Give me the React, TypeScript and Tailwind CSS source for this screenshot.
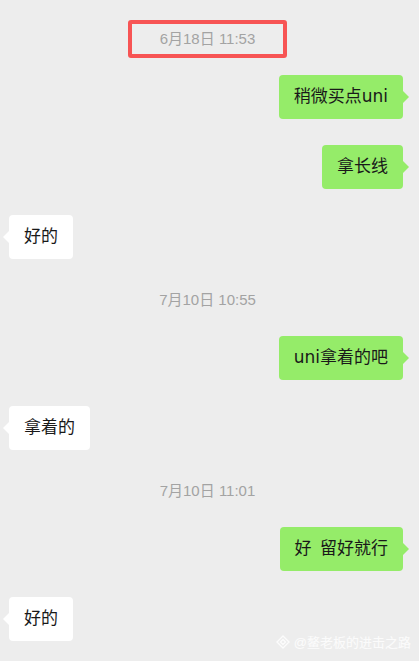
const font = {
  fontFamily: '"Liberation Sans", "Noto Sans CJK SC", sans-serif',
}

const bubbleFont = {
  fontFamily: '"DejaVu Sans", "Noto Sans CJK SC", sans-serif',
}

type Item =
  | { kind: 'time'; text: string; marked?: boolean }
  | { kind: 'msg'; side: 'left' | 'right'; text: string }

const items: Item[] = [
  { kind: 'time', text: '6月18日 11:53', marked: true },
  { kind: 'msg', side: 'right', text: '稍微买点uni' },
  { kind: 'msg', side: 'right', text: '拿长线' },
  { kind: 'msg', side: 'left', text: '好的' },
  { kind: 'time', text: '7月10日 10:55' },
  { kind: 'msg', side: 'right', text: 'uni拿着的吧' },
  { kind: 'msg', side: 'left', text: '拿着的' },
  { kind: 'time', text: '7月10日 11:01' },
  { kind: 'msg', side: 'right', text: '好 留好就行' },
  { kind: 'msg', side: 'left', text: '好的' },
]

function TimeRow({ text, marked, first }: { text: string; marked?: boolean; first: boolean }) {
  return (
    <div className={`flex h-5 items-center justify-center pr-1 ${first ? '' : 'mt-[5px]'}`}>
      <span className="relative text-[15px] leading-5 text-[#a3a3a3]">
        {text}
        {marked && (
          <span className="absolute -top-[9px] -bottom-[9px] -left-[32px] -right-[32px] rounded-[3px] border-4 border-[#f75454]" />
        )}
      </span>
    </div>
  )
}

function Bubble({ side, text }: { side: 'left' | 'right'; text: string }) {
  const isRight = side === 'right'
  return (
    <div className={`flex ${isRight ? 'justify-end pr-4' : 'justify-start pl-[9px]'}`}>
      <div
        className={`relative flex h-11 items-center rounded-[4px] px-[15px] text-[17px] text-[#191919] [word-spacing:3px] ${
          isRight ? 'bg-[#95ec69]' : 'bg-white'
        }`}
        style={bubbleFont}
      >
        {text}
        {isRight ? (
          <span className="absolute top-1/2 -right-[6px] -mt-[6px] h-0 w-0 border-y-[6px] border-l-[6px] border-y-transparent border-l-[#95ec69]" />
        ) : (
          <span className="absolute top-1/2 -left-[6px] -mt-[6px] h-0 w-0 border-y-[6px] border-r-[6px] border-y-transparent border-r-white" />
        )}
      </div>
    </div>
  )
}

export default function App() {
  return (
    <div className="relative h-[661px] w-[419px] overflow-hidden bg-[#ededed]" style={font}>
      <div className="flex flex-col gap-[26px] pt-[29px]">
        {items.map((item, i) =>
          item.kind === 'time' ? (
            <TimeRow key={i} text={item.text} marked={item.marked} first={i === 0} />
          ) : (
            <Bubble key={i} side={item.side} text={item.text} />
          ),
        )}
      </div>

      {/* watermark */}
      <div className="absolute bottom-[9px] right-[8px] flex items-center gap-1 text-[13px] text-white/80">
        <svg width="14" height="14" viewBox="0 0 14 14" fill="none" stroke="white" strokeOpacity="0.8" strokeWidth="1.4">
          <path d="M7 1 L13 7 L7 13 L1 7 Z" />
          <path d="M7 4.5 L9.5 7 L7 9.5 L4.5 7 Z" />
        </svg>
        <span>@鳌老板的进击之路</span>
      </div>
    </div>
  )
}
